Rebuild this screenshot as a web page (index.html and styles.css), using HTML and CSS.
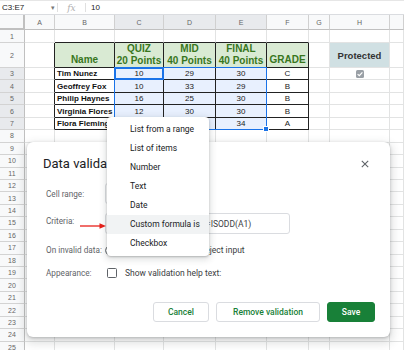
FILE: index.html
```html
<!DOCTYPE html>
<html lang="en">
<head>
    <meta charset="UTF-8">
    <meta name="viewport" content="width=device-width, initial-scale=1.0">
    <title>Data validation</title>
    <link rel="stylesheet" href="styles.css">
</head>
<body>
    <div class="formula-bar">
        <div class="name-box">C3:E7</div>
        <div class="name-arrow">▾</div>
        <div class="fb-sep"></div>
        <div class="fx">fx</div>
        <div class="fb-sep"></div>
        <div class="fb-value">10</div>
    </div>

    <div class="sheet">
        <div class="corner"></div><div class="ch">A</div><div class="ch">B</div><div class="ch sel">C</div><div class="ch sel">D</div><div class="ch sel">E</div><div class="ch">F</div><div class="ch">G</div><div class="ch">H</div><div class="ch"></div>

        <div class="rh">1</div><div></div><div class="tb"></div><div class="tb"></div><div class="tb"></div><div class="tb"></div><div class="tb"></div><div></div><div></div><div></div>

        <div class="rh">2</div><div class="lb"></div>
        <div class="t hd bottom">Name</div>
        <div class="t hd">QUIZ<br>20 Points</div>
        <div class="t hd">MID<br>40 Points</div>
        <div class="t hd">FINAL<br>40 Points</div>
        <div class="t hd bottom">GRADE</div>
        <div></div><div class="prot">Protected</div><div></div>

        <div class="rh sel">3</div><div class="lb"></div>
        <div class="t nm">Tim Nunez</div><div class="t s num">10</div><div class="t s num">29</div><div class="t s num">30</div><div class="t num">C</div>
        <div></div>
        <div class="chk-cell"><span class="chk"><svg viewBox="0 0 8 8" width="8" height="8"><path d="M1.6 4.1 L3.3 5.7 L6.4 2.4" fill="none" stroke="#fff" stroke-width="1.2"/></svg></span></div>
        <div></div>

        <div class="rh sel">4</div><div class="lb"></div>
        <div class="t nm">Geoffrey Fox</div><div class="t s num">10</div><div class="t s num">33</div><div class="t s num">29</div><div class="t num">B</div>
        <div></div><div></div><div></div>

        <div class="rh sel">5</div><div class="lb"></div>
        <div class="t nm">Philip Haynes</div><div class="t s num">16</div><div class="t s num">25</div><div class="t s num">30</div><div class="t num">B</div>
        <div></div><div></div><div></div>

        <div class="rh sel">6</div><div class="lb"></div>
        <div class="t nm">Virginia Flores</div><div class="t s num">12</div><div class="t s num">30</div><div class="t s num">30</div><div class="t num">B</div>
        <div></div><div></div><div></div>

        <div class="rh sel">7</div><div class="lb"></div>
        <div class="t nm">Flora Fleming</div><div class="t s num"></div><div class="t s num"></div><div class="t s num">34</div><div class="t num">A</div>
        <div></div><div></div><div></div>

        <div class="rh">8</div><div></div><div></div><div></div><div></div><div></div><div></div><div></div><div></div><div></div>
        <div class="rh">9</div><div></div><div></div><div></div><div></div><div></div><div></div><div></div><div></div><div></div>
        <div class="rh">10</div><div></div><div></div><div></div><div></div><div></div><div></div><div></div><div></div><div></div>
        <div class="rh">11</div><div></div><div></div><div></div><div></div><div></div><div></div><div></div><div></div><div></div>
        <div class="rh">12</div><div></div><div></div><div></div><div></div><div></div><div></div><div></div><div></div><div></div>
        <div class="rh">13</div><div></div><div></div><div></div><div></div><div></div><div></div><div></div><div></div><div></div>
        <div class="rh">14</div><div></div><div></div><div></div><div></div><div></div><div></div><div></div><div></div><div></div>
        <div class="rh">15</div><div></div><div></div><div></div><div></div><div></div><div></div><div></div><div></div><div></div>
        <div class="rh">16</div><div></div><div></div><div></div><div></div><div></div><div></div><div></div><div></div><div></div>
        <div class="rh">17</div><div></div><div></div><div></div><div></div><div></div><div></div><div></div><div></div><div></div>
        <div class="rh">18</div><div></div><div></div><div></div><div></div><div></div><div></div><div></div><div></div><div></div>
        <div class="rh">19</div><div></div><div></div><div></div><div></div><div></div><div></div><div></div><div></div><div></div>
        <div class="rh">20</div><div></div><div></div><div></div><div></div><div></div><div></div><div></div><div></div><div></div>
        <div class="rh">21</div><div></div><div></div><div></div><div></div><div></div><div></div><div></div><div></div><div></div>
        <div class="rh">22</div><div></div><div></div><div></div><div></div><div></div><div></div><div></div><div></div><div></div>
        <div class="rh">23</div><div></div><div></div><div></div><div></div><div></div><div></div><div></div><div></div><div></div>
        <div class="rh">24</div><div></div><div></div><div></div><div></div><div></div><div></div><div></div><div></div><div></div>
        <div class="rh">25</div><div></div><div></div><div></div><div></div><div></div><div></div><div></div><div></div><div></div>

        <div class="selection"><span class="handle"></span></div>
        <div class="active-cell"></div>
    </div>

    <div class="dialog">
        <div class="dialog-title">Data validation</div>
        <svg class="close" viewBox="0 0 8 8" width="8" height="8"><path d="M0.8 0.8 L7.2 7.2 M7.2 0.8 L0.8 7.2" stroke="#5f6368" stroke-width="1.1"/></svg>

        <div class="row row-range">
            <div class="label">Cell range:</div>
            <div class="box range-box"></div>
        </div>
        <div class="row row-criteria">
            <div class="label">Criteria:</div>
            <div class="box select-box"></div>
            <div class="box formula-box">=ISODD(A1)</div>
        </div>
        <div class="row row-invalid">
            <div class="label">On invalid data:</div>
            <div class="option"><span class="radio"></span></div>
            <div class="option"><span class="radio"></span>Reject input</div>
        </div>
        <div class="row row-appearance">
            <div class="label">Appearance:</div>
            <span class="checkbox"></span>
            <span class="option-text">Show validation help text:</span>
        </div>
        <div class="buttons">
            <div class="btn btn-cancel">Cancel</div>
            <div class="btn btn-remove">Remove validation</div>
            <div class="btn btn-save">Save</div>
        </div>
    </div>

    <svg class="pointer" viewBox="0 0 28 8" width="28" height="8"><path d="M1 4 H22" stroke="#e8201a" stroke-width="1.3"/><polygon points="20.5,1.3 27,4 20.5,6.7" fill="#e8201a"/></svg>

    <div class="menu">
        <div class="menu-item">List from a range</div>
        <div class="menu-item">List of items</div>
        <div class="menu-item">Number</div>
        <div class="menu-item">Text</div>
        <div class="menu-item">Date</div>
        <div class="menu-item active">Custom formula is</div>
        <div class="menu-item">Checkbox</div>
    </div>
</body>
</html>
```

FILE: styles.css
```css
body {
    margin: 0;
    width: 404px;
    height: 350px;
    overflow: hidden;
    position: relative;
    background-color: #fff;
    font-family: "Liberation Sans", Arial, sans-serif;
}

/* formula bar */
.formula-bar {
    display: flex;
    align-items: center;
    height: 15px;
    box-sizing: border-box;
    border-top: 1px solid #e6e6e6;
    border-bottom: 1px solid #dadce0;
    font-size: 8px;
    color: #222;
}
.name-box {
    width: 49px;
    padding-left: 2px;
}
.name-arrow {
    width: 6px;
    font-size: 7px;
    color: #777;
}
.fb-sep {
    width: 1px;
    height: 9px;
    background-color: #e0e0e0;
}
.fx {
    width: 27px;
    text-align: center;
    font-family: "DejaVu Serif", serif;
    font-style: italic;
    font-size: 9px;
    color: #b0b0b0;
}
.fb-value {
    padding-left: 5px;
}

/* grid */
.sheet {
    position: relative;
    display: grid;
    grid-template-columns: 25px 30px 60px 49px 52px 51px 42px 21px 60px 1fr;
    grid-template-rows: 15px 13px 25px repeat(23, 12.45px);
}
.sheet > div {
    box-sizing: border-box;
    border-right: 1px solid #e2e3e3;
    border-bottom: 1px solid #e2e3e3;
    display: flex;
    align-items: center;
    white-space: nowrap;
    min-width: 0;
}
.sheet > .corner {
    background-color: #f8f9fa;
    border-right: 2px solid #c0c0c0;
    border-bottom: 2px solid #c0c0c0;
}
.sheet > .ch {
    justify-content: center;
    background-color: #f8f9fa;
    border-right-color: #d0d0d0;
    border-bottom-color: #c0c0c0;
    font-size: 7px;
    color: #666;
}
.sheet > .rh {
    justify-content: center;
    background-color: #f8f9fa;
    border-right-color: #c0c0c0;
    border-bottom-color: #d3d3d3;
    font-size: 7px;
    color: #666;
}
.sheet > .sel {
    background-color: #e8eaed;
}
.sheet > .tb {
    border-bottom-color: #222;
}
.sheet > .lb {
    border-right-color: #222;
}
.sheet > .t {
    border-right-color: #222;
    border-bottom-color: #222;
}
.sheet > .hd {
    flex-direction: column;
    justify-content: center;
    background-color: #d9ead3;
    color: #38761d;
    font-weight: bold;
    font-size: 10px;
    line-height: 12px;
    text-align: center;
}
.sheet > .hd.bottom {
    justify-content: flex-end;
    padding-bottom: 1px;
}
.sheet > .nm {
    padding-left: 2px;
    font-weight: bold;
    font-size: 8px;
    color: #111;
}
.sheet > .num {
    justify-content: center;
    font-size: 8px;
    color: #222;
}
.sheet > .s {
    background-color: #e8f0fe;
}
.sheet > .prot {
    justify-content: center;
    background-color: #d0e0e3;
    font-weight: bold;
    font-size: 9.5px;
    color: #333;
}
.sheet > .chk-cell {
    justify-content: center;
}
.chk {
    display: flex;
    width: 8px;
    height: 8px;
    border-radius: 1.5px;
    background-color: #9aa0a6;
}
/* overlays span grid areas without taking part in auto placement */
.sheet > .selection {
    position: absolute;
    grid-column: 4 / 7;
    grid-row: 4 / 9;
    top: -1px;
    left: -1px;
    right: 0;
    bottom: 0;
    border: 1px solid #1a73e8;
}
.handle {
    position: absolute;
    right: -3px;
    bottom: -3px;
    width: 4px;
    height: 4px;
    background-color: #1a73e8;
    border: 1px solid #fff;
}
.sheet > .active-cell {
    position: absolute;
    grid-column: 4 / 5;
    grid-row: 4 / 5;
    top: -1px;
    left: -1px;
    right: 0;
    bottom: 0;
    border: 2px solid #1a73e8;
}

/* dialog */
.dialog {
    position: absolute;
    left: 27px;
    top: 142px;
    width: 363px;
    height: 195px;
    box-sizing: border-box;
    padding: 14px 15px 15px 16px;
    background-color: #fff;
    border-radius: 6px;
    box-shadow: 0 1px 3px rgba(60, 64, 67, 0.3), 0 4px 8px 3px rgba(60, 64, 67, 0.15);
    font-family: Roboto, "Liberation Sans", sans-serif;
}
.dialog-title {
    font-size: 13px;
    line-height: 16px;
    color: #202124;
}
.close {
    position: absolute;
    right: 21px;
    top: 18px;
}
.row {
    display: flex;
    align-items: center;
    font-size: 8.5px;
    color: #5f6368;
}
.label {
    flex: none;
    width: 59px;
    padding-left: 3px;
    font-size: 8.2px;
}
.row-range {
    margin-top: 11px;
    height: 21px;
}
.row-criteria {
    margin-top: 9px;
    height: 21px;
}
.row-criteria .label {
    margin-top: -6px;
}
.row-invalid {
    margin-top: 7px;
    height: 18px;
}
.row-appearance {
    margin-top: 6px;
    height: 16px;
}
.box {
    box-sizing: border-box;
    height: 21px;
    border: 1px solid #dadce0;
    border-radius: 3px;
}
.range-box {
    width: 100px;
}
.select-box {
    width: 85px;
}
.formula-box {
    display: flex;
    align-items: center;
    width: 93px;
    margin-left: 7px;
    padding-left: 8px;
    color: #3c4043;
}
.option {
    display: flex;
    align-items: center;
    width: 80px;
    color: #3c4043;
}
.radio {
    width: 7px;
    height: 7px;
    margin-right: 6px;
    border: 1px solid #5f6368;
    border-radius: 50%;
}
.checkbox {
    flex: none;
    width: 10px;
    height: 10px;
    box-sizing: border-box;
    margin-left: 2px;
    margin-right: 8px;
    border: 1.5px solid #5f6368;
    border-radius: 1.5px;
}
.option-text {
    color: #3c4043;
}
.buttons {
    display: flex;
    justify-content: flex-end;
    gap: 7px;
    margin-top: 21px;
}
.btn {
    box-sizing: border-box;
    height: 20px;
    line-height: 18px;
    border: 1px solid #dadce0;
    border-radius: 3px;
    text-align: center;
    font-size: 8.5px;
    font-weight: 500;
    color: #188038;
}
.btn-cancel {
    width: 56px;
}
.btn-remove {
    width: 104px;
}
.btn-save {
    width: 48px;
    background-color: #188038;
    border-color: #188038;
    color: #fff;
}

/* annotation arrow */
.pointer {
    position: absolute;
    left: 79px;
    top: 222px;
}

/* criteria dropdown */
.menu {
    position: absolute;
    left: 107px;
    top: 117px;
    width: 102px;
    padding: 2.5px 0 3px;
    background-color: #fff;
    border-radius: 4px;
    box-shadow: 0 2px 6px 2px rgba(60, 64, 67, 0.15), 0 1px 2px rgba(60, 64, 67, 0.3);
    font-family: Roboto, "Liberation Sans", sans-serif;
    font-size: 8.5px;
    color: #202124;
}
.menu-item {
    height: 19px;
    line-height: 19px;
    padding-left: 23px;
    white-space: nowrap;
}
.menu-item.active {
    background-color: #f1f3f4;
}
```
